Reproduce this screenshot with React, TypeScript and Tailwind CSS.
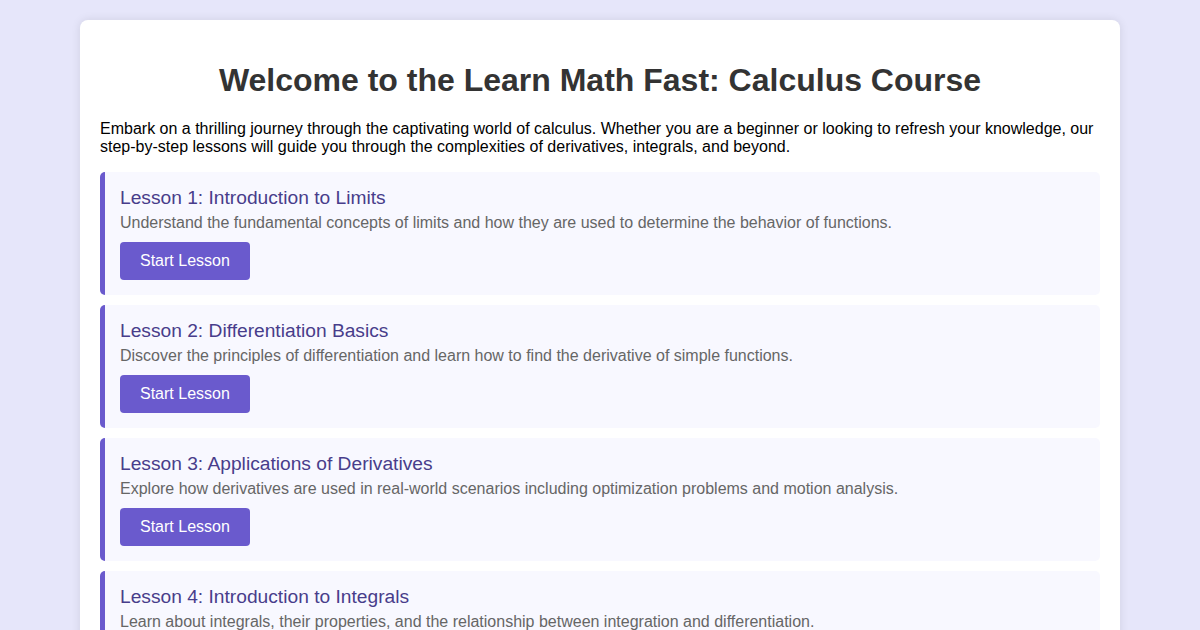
const lessons = [
  {
    title: 'Lesson 1: Introduction to Limits',
    text: 'Understand the fundamental concepts of limits and how they are used to determine the behavior of functions.',
  },
  {
    title: 'Lesson 2: Differentiation Basics',
    text: 'Discover the principles of differentiation and learn how to find the derivative of simple functions.',
  },
  {
    title: 'Lesson 3: Applications of Derivatives',
    text: 'Explore how derivatives are used in real-world scenarios including optimization problems and motion analysis.',
  },
  {
    title: 'Lesson 4: Introduction to Integrals',
    text: 'Learn about integrals, their properties, and the relationship between integration and differentiation.',
  },
]

export default function App() {
  return (
    <div className="min-h-screen bg-[#e6e6fa] pt-5 font-['Liberation_Sans',Arial,sans-serif]">
      <div className="mx-auto w-[1040px] rounded-lg bg-white p-5 shadow-[0_0_10px_rgba(0,0,0,0.1)]">
        <h1 className="mt-[22px] mb-[21px] text-center text-[32px] leading-[37px] font-bold text-[#333]">
          Welcome to the Learn Math Fast: Calculus Course
        </h1>
        <p className="mb-4 text-base leading-[18px] text-black">
          Embark on a thrilling journey through the captivating world of calculus. Whether you are a beginner or looking to refresh your knowledge, our step-by-step lessons will guide you through the complexities of derivatives, integrals, and beyond.
        </p>

        {/* Lessons */}
        {lessons.map((lesson) => (
          <div
            key={lesson.title}
            className="mb-2.5 rounded-[5px] border-l-[5px] border-[#6a5acd] bg-[#f8f8ff] p-[15px]"
          >
            <h3 className="mb-[5px] text-[19.2px] leading-[22px] text-[#483d8b]">{lesson.title}</h3>
            <p className="text-base leading-[18px] text-[#666]">{lesson.text}</p>
            <button className="mt-2.5 rounded bg-[#6a5acd] px-5 py-2.5 text-base leading-[18px] text-white">
              Start Lesson
            </button>
          </div>
        ))}
      </div>
    </div>
  )
}
